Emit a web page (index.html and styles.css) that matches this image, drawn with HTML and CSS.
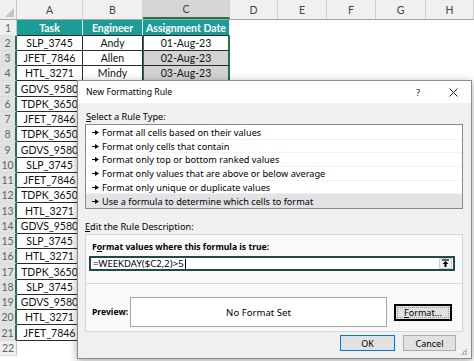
FILE: index.html
```html
<!DOCTYPE html>
<html lang="en">
<head>
  <meta charset="UTF-8">
  <title>New Formatting Rule</title>
  <link rel="stylesheet" href="styles.css">
</head>
<body>
  <div class="sheet">
    <div class="row head">
      <div class="rh corner"><span class="tri"></span></div>
      <div class="ch col-a">A</div>
      <div class="ch col-b">B</div>
      <div class="ch col-c active">C</div>
      <div class="ch col-d">D</div>
      <div class="ch col-e">E</div>
      <div class="ch col-f">F</div>
      <div class="ch col-g">G</div>
      <div class="ch col-h">H</div>
    </div>

    <div class="row tall">
      <div class="rh">1</div>
      <div class="cell col-a th">Task</div>
      <div class="cell col-b th">Engineer</div>
      <div class="cell col-c th">Assignment Date</div>
    </div>
    <div class="row">
      <div class="rh sel">2</div>
      <div class="cell col-a">SLP_3745</div>
      <div class="cell col-b">Andy</div>
      <div class="cell col-c picked">01-Aug-23</div>
    </div>
    <div class="row">
      <div class="rh sel">3</div>
      <div class="cell col-a">JFET_7846</div>
      <div class="cell col-b">Allen</div>
      <div class="cell col-c picked shade">02-Aug-23</div>
    </div>
    <div class="row">
      <div class="rh sel">4</div>
      <div class="cell col-a">HTL_3271</div>
      <div class="cell col-b">Mindy</div>
      <div class="cell col-c picked shade">03-Aug-23</div>
    </div>
    <div class="row tall"><div class="rh sel">5</div><div class="cell col-a">GDVS_9580</div></div>
    <div class="row"><div class="rh sel">6</div><div class="cell col-a">TDPK_3650</div></div>
    <div class="row"><div class="rh sel">7</div><div class="cell col-a">JFET_7846</div></div>
    <div class="row"><div class="rh sel">8</div><div class="cell col-a">TDPK_3650</div></div>
    <div class="row tall"><div class="rh sel">9</div><div class="cell col-a">GDVS_9580</div></div>
    <div class="row"><div class="rh sel">10</div><div class="cell col-a">SLP_3745</div></div>
    <div class="row"><div class="rh sel">11</div><div class="cell col-a">JFET_7846</div></div>
    <div class="row"><div class="rh sel">12</div><div class="cell col-a">TDPK_3650</div></div>
    <div class="row tall"><div class="rh sel">13</div><div class="cell col-a">HTL_3271</div></div>
    <div class="row"><div class="rh sel">14</div><div class="cell col-a">GDVS_9580</div></div>
    <div class="row"><div class="rh sel">15</div><div class="cell col-a">SLP_3745</div></div>
    <div class="row"><div class="rh sel">16</div><div class="cell col-a">HTL_3271</div></div>
    <div class="row tall"><div class="rh sel">17</div><div class="cell col-a">TDPK_3650</div></div>
    <div class="row"><div class="rh sel">18</div><div class="cell col-a">SLP_3745</div></div>
    <div class="row"><div class="rh sel">19</div><div class="cell col-a">GDVS_9580</div></div>
    <div class="row"><div class="rh sel">20</div><div class="cell col-a">HTL_3271</div></div>
    <div class="row tall"><div class="rh sel">21</div><div class="cell col-a">JFET_7846</div></div>
    <div class="row"><div class="rh">22</div><div class="cell col-a blank"></div></div>
  </div>

  <div class="dialog">
    <div class="dlg-title">
      <span>New Formatting Rule</span>
      <div class="dlg-btns">
        <span class="tbtn">?</span>
        <span class="tbtn">
          <svg width="9" height="9" viewBox="0 0 9 9"><path d="M0.5 0.5 L8.5 8.5 M8.5 0.5 L0.5 8.5" stroke="#222" stroke-width="1"/></svg>
        </span>
      </div>
    </div>

    <div class="dlg-body">
      <div class="label first"><u>S</u>elect a Rule Type:</div>
      <div class="rule-list">
        <div class="rule"><svg class="arr" width="7" height="5" viewBox="0 0 7 5"><path d="M0 2.5 H3.5" stroke="#000" stroke-width="1"/><path d="M3 0 L7 2.5 L3 5 Z" fill="#000"/></svg>Format all cells based on their values</div>
        <div class="rule"><svg class="arr" width="7" height="5" viewBox="0 0 7 5"><path d="M0 2.5 H3.5" stroke="#000" stroke-width="1"/><path d="M3 0 L7 2.5 L3 5 Z" fill="#000"/></svg>Format only cells that contain</div>
        <div class="rule"><svg class="arr" width="7" height="5" viewBox="0 0 7 5"><path d="M0 2.5 H3.5" stroke="#000" stroke-width="1"/><path d="M3 0 L7 2.5 L3 5 Z" fill="#000"/></svg>Format only top or bottom ranked values</div>
        <div class="rule"><svg class="arr" width="7" height="5" viewBox="0 0 7 5"><path d="M0 2.5 H3.5" stroke="#000" stroke-width="1"/><path d="M3 0 L7 2.5 L3 5 Z" fill="#000"/></svg>Format only values that are above or below average</div>
        <div class="rule"><svg class="arr" width="7" height="5" viewBox="0 0 7 5"><path d="M0 2.5 H3.5" stroke="#000" stroke-width="1"/><path d="M3 0 L7 2.5 L3 5 Z" fill="#000"/></svg>Format only unique or duplicate values</div>
        <div class="rule current"><svg class="arr" width="7" height="5" viewBox="0 0 7 5"><path d="M0 2.5 H3.5" stroke="#000" stroke-width="1"/><path d="M3 0 L7 2.5 L3 5 Z" fill="#000"/></svg>Use a formula to determine which cells to format</div>
      </div>

      <div class="label second"><u>E</u>dit the Rule Description:</div>
      <div class="desc">
        <div class="label bold">F<u>o</u>rmat values where this formula is true:</div>
        <div class="formula">
          <span>=WEEKDAY($C2,2)&gt;5</span><span class="caret"></span>
          <span class="collapse">
            <svg width="9" height="9" viewBox="0 0 9 9"><path d="M1 1 H8" stroke="#000" stroke-width="1.2"/><path d="M4.5 2 L1.5 5 H3.5 V8 H5.5 V5 H7.5 Z" fill="#000"/></svg>
          </span>
        </div>
        <div class="sep"></div>
        <div class="preview-row">
          <div class="label bold pv-label">Preview:</div>
          <div class="preview">No Format Set</div>
          <div class="btn default"><span><u>F</u>ormat...</span></div>
        </div>
      </div>

      <div class="actions">
        <div class="btn ok">OK</div>
        <div class="btn">Cancel</div>
      </div>
    </div>
    <div class="grip"></div>
  </div>
</body>
</html>
```

FILE: styles.css
```css
* {
  box-sizing: border-box;
}

body {
  margin: 0;
  width: 474px;
  height: 361px;
  overflow: hidden;
  position: relative;
  background: #ffffff;
  font-family: Lato, 'Liberation Sans', sans-serif;
}

/* spreadsheet */
.sheet {
  display: flex;
  flex-direction: column;
}

.row {
  display: flex;
  height: 15px;
}

.row.tall {
  height: 16px;
}

.row.head {
  height: 20px;
  background: #f0f0f0;
  border-bottom: 1px solid #a6a6a6;
}

.col-a { width: 66px; }
.col-b { width: 60px; }
.col-c { width: 87px; }
.col-d { width: 48px; }
.col-e { width: 49px; }
.col-f { width: 49px; }
.col-g { width: 50px; }
.col-h { width: 48px; }

.ch {
  display: flex;
  align-items: center;
  justify-content: center;
  font-size: 10.5px;
  color: #444;
  border-right: 1px solid #d0d0d0;
}

.ch.active {
  background: #d6d6d6;
  border-bottom: 2px solid #217346;
}

.rh {
  width: 17px;
  flex-shrink: 0;
  display: flex;
  align-items: center;
  justify-content: center;
  font-size: 10.5px;
  color: #666;
  background: #f0f0f0;
  border-right: 1px solid #c6c6c6;
  border-bottom: 1px solid #dcdcdc;
}

.rh.sel {
  background: #e2e2e2;
  color: #566b5c;
  border-right: 2px solid #2b6e4a;
}

.rh.corner {
  position: relative;
  border-bottom: none;
}

.tri {
  position: absolute;
  right: 2px;
  bottom: 2px;
  width: 0;
  height: 0;
  border-left: 9px solid transparent;
  border-bottom: 9px solid #c4c4c4;
}

.cell {
  display: flex;
  align-items: center;
  justify-content: center;
  font-size: 10.5px;
  color: #111;
  border-right: 1px solid #2a2a2a;
  border-bottom: 1px solid #2a2a2a;
  white-space: nowrap;
  overflow: hidden;
}

.cell.th {
  background: #1c9c97;
  color: #ffffff;
  font-weight: 700;
  border-right-color: #e8f4f3;
}

.cell.picked {
  border-left: 1px solid #217346;
  border-right: 2px solid #217346;
}

.cell.shade {
  background: #d2d2d2;
}

.cell.blank {
  border: none;
}

/* dialog */
.dialog {
  position: absolute;
  left: 77px;
  top: 80px;
  width: 395px;
  height: 279px;
  background: #f0f0f0;
  border: 1px solid #8c8c8c;
  box-shadow: 0 2px 8px rgba(0, 0, 0, 0.35);
  font-family: 'Noto Sans', 'Open Sans', sans-serif;
  font-size: 9.2px;
  color: #000;
}

.dlg-title {
  height: 22px;
  background: #ffffff;
  display: flex;
  align-items: center;
  padding-left: 8px;
  font-size: 8.7px;
}

.dlg-btns {
  margin-left: auto;
  display: flex;
  gap: 5px;
  padding-right: 3px;
}

.tbtn {
  width: 30px;
  display: flex;
  align-items: center;
  justify-content: center;
  font-size: 9.5px;
  color: #222;
}

.dlg-body {
  padding: 0 8px 0 7px;
}

.label {
  line-height: 13px;
  white-space: nowrap;
}

.label.first {
  margin-top: 7px;
  padding-left: 1px;
}

.label.second {
  margin-top: 11px;
}

.label.bold {
  font-weight: 700;
  font-size: 8.6px;
}

.rule-list {
  margin-top: 1px;
  background: #ffffff;
  border: 1px solid #8a8a8a;
  padding-top: 1px;
}

.rule {
  height: 13.7px;
  display: flex;
  align-items: center;
  padding-left: 6px;
  border-bottom: 1px solid #f2f2f2;
  white-space: nowrap;
}

.rule.current {
  background: #e3e3e6;
  border-bottom: none;
}

.arr {
  margin-right: 3px;
}

.desc {
  margin-top: 1px;
  border: 1px solid #d6d6d6;
  background: #f9f9f9;
  padding: 6px 7px 4px 3px;
  height: 98px;
}

.desc .label.bold {
  padding-left: 3px;
}

.formula {
  margin-top: 2px;
  height: 15px;
  background: #ffffff;
  border: 2px solid #1f4a48;
  display: flex;
  align-items: center;
  padding-left: 2px;
  font-size: 9.6px;
}

.caret {
  width: 1px;
  height: 10px;
  background: #000;
  margin-left: 1px;
}

.collapse {
  margin-left: auto;
  margin-right: 1px;
  width: 13px;
  height: 11px;
  display: flex;
  align-items: center;
  justify-content: center;
  background: #f4f4f4;
  border: 1px solid #cfcfcf;
}

.sep {
  margin: 12px -7px 0 -3px;
  height: 1px;
  background: #d8d8d8;
}

.preview-row {
  display: flex;
  align-items: center;
  margin-top: 13px;
}

.pv-label {
  width: 41px;
  padding-left: 3px;
}

.preview {
  width: 257px;
  height: 30px;
  background: #ffffff;
  border: 1px solid #a4a4a4;
  display: flex;
  align-items: center;
  justify-content: center;
  font-size: 9.6px;
}

.btn {
  height: 17px;
  display: flex;
  align-items: center;
  justify-content: center;
  background: #e1e1e1;
  border: 1px solid #adadad;
  white-space: nowrap;
  font-size: 9px;
}

.btn.default {
  margin-left: 7px;
  width: 58px;
  border: 2px solid #000;
  padding: 1px;
  background: #e1e1e1;
}

.btn.default span {
  display: flex;
  align-items: center;
  justify-content: center;
  width: 100%;
  height: 100%;
  border: 1px dotted #9a9a9a;
}

.actions {
  display: flex;
  justify-content: flex-end;
  gap: 8px;
  margin: 3px 7px 0 0;
}

.actions .btn {
  width: 53px;
  height: 16px;
}

.actions .btn.ok {
  width: 55px;
  border-color: #0078d7;
}

.grip {
  position: absolute;
  right: 4px;
  bottom: 3px;
  width: 7px;
  height: 7px;
  background:
    radial-gradient(circle, #a8a8a8 0.8px, transparent 1px) 0 0 / 2.4px 2.4px;
  clip-path: polygon(100% 0, 100% 100%, 0 100%);
}
```
